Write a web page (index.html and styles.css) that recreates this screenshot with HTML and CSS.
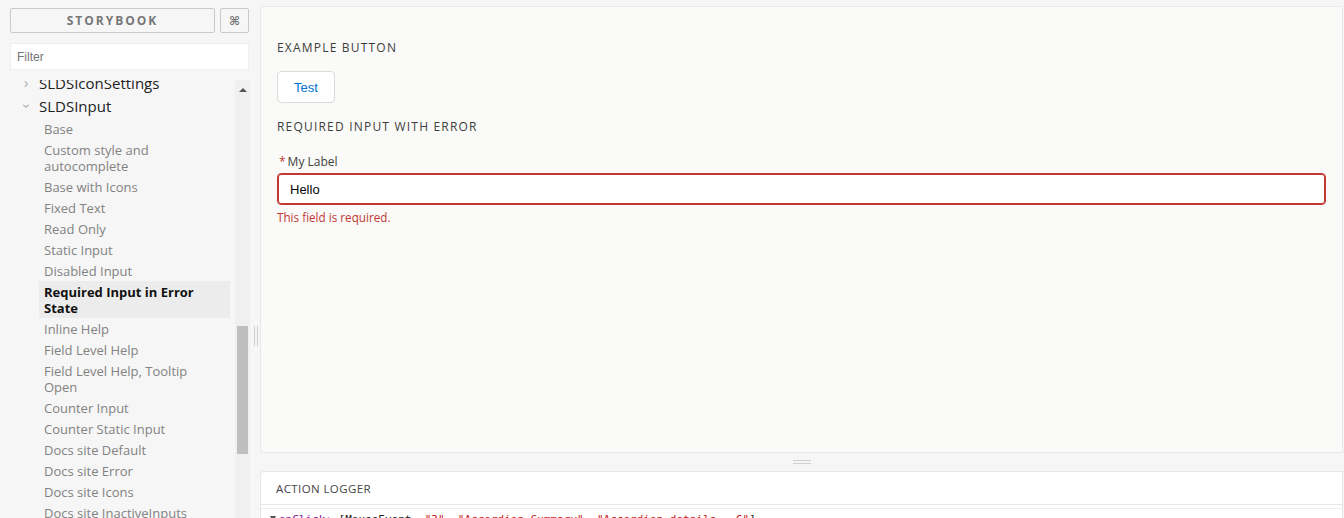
FILE: index.html
```html
<!DOCTYPE html>
<html lang="en">
<head>
    <meta charset="UTF-8">
    <title>Storybook - SLDSInput</title>
    <link rel="stylesheet" href="styles.css">
</head>
<body>
    <aside class="sidebar">
        <div class="brand-row">
            <button class="brand">STORYBOOK</button>
            <button class="shortcut">&#8984;</button>
        </div>
        <input class="filter" type="text" placeholder="Filter">

        <div class="tree-wrap">
            <ul class="tree">
                <li class="tree-kind"><span class="chev">&#8250;</span>SLDSIconSettings</li>
                <li class="tree-kind"><span class="chev open">&#8250;</span>SLDSInput</li>
                <li class="tree-story">Base</li>
                <li class="tree-story">Custom style and autocomplete</li>
                <li class="tree-story">Base with Icons</li>
                <li class="tree-story">Fixed Text</li>
                <li class="tree-story">Read Only</li>
                <li class="tree-story">Static Input</li>
                <li class="tree-story">Disabled Input</li>
                <li class="tree-story active">Required Input in Error State</li>
                <li class="tree-story">Inline Help</li>
                <li class="tree-story">Field Level Help</li>
                <li class="tree-story">Field Level Help, Tooltip Open</li>
                <li class="tree-story">Counter Input</li>
                <li class="tree-story">Counter Static Input</li>
                <li class="tree-story">Docs site Default</li>
                <li class="tree-story">Docs site Error</li>
                <li class="tree-story">Docs site Icons</li>
                <li class="tree-story">Docs site InactiveInputs</li>
            </ul>
            <div class="scrollbar">
                <span class="scroll-up"></span>
                <span class="scroll-thumb"></span>
            </div>
        </div>
    </aside>

    <div class="v-splitter"><span></span></div>

    <main class="main">
        <section class="preview">
            <h2 class="title-caps">Example Button</h2>
            <button class="btn-neutral">Test</button>

            <h2 class="title-caps">Required Input with Error</h2>
            <div class="form-element">
                <label class="form-label"><abbr class="required">*</abbr>My Label</label>
                <input class="form-input" type="text" value="Hello">
                <div class="form-help">This field is required.</div>
            </div>
        </section>

        <div class="h-splitter"><span></span></div>

        <section class="addons">
            <div class="addons-tabs">
                <span class="addons-tab">ACTION LOGGER</span>
            </div>
            <div class="log">
                <div class="log-line"><span class="tri"></span><span class="log-name">onClick:</span> [MouseEvent, <span class="log-str">"3"</span>, <span class="log-str">"Accordion Summary"</span>, <span class="log-str">"Accordion details - 6"</span>]</div>
            </div>
        </section>
    </main>
</body>
</html>
```

FILE: styles.css
```css
* {
    margin: 0;
    padding: 0;
    box-sizing: border-box;
}

html, body {
    height: 100%;
    overflow: hidden;
}

body {
    display: flex;
    font-family: 'Open Sans', 'Noto Sans', sans-serif;
    background-color: #f6f6f6;
    color: #333;
}

/* sidebar */

.sidebar {
    width: 252px;
    flex-shrink: 0;
    display: flex;
    flex-direction: column;
    padding-top: 8px;
}

.brand-row {
    display: flex;
    gap: 5px;
    padding: 0 3px 0 10px;
}

.brand {
    flex: 1;
    height: 25px;
    background: #f6f6f6;
    border: 1px solid #c9c9c9;
    border-radius: 2px;
    font-family: 'Open Sans', sans-serif;
    font-weight: 700;
    font-size: 12px;
    letter-spacing: 2px;
    color: #777;
}

.shortcut {
    width: 29px;
    height: 25px;
    background: #f6f6f6;
    border: 1px solid #c9c9c9;
    border-radius: 2px;
    font-size: 12px;
    font-weight: 700;
    color: #777;
    font-family: 'DejaVu Sans', sans-serif;
}

.filter {
    margin: 10px 3px 0 10px;
    height: 27px;
    border: 1px solid #efefef;
    background: #fff;
    padding: 0 6px;
    font-family: 'Liberation Sans', sans-serif;
    font-size: 12px;
    outline: none;
}

.filter::placeholder {
    color: #757575;
}

.tree-wrap {
    flex: 1;
    display: flex;
    margin-top: 10px;
    overflow: hidden;
}

.tree {
    list-style: none;
    width: 235px;
    margin-top: -9px;
}

.tree-kind {
    position: relative;
    height: 24px;
    line-height: 24px;
    padding-left: 39px;
    font-size: 15px;
    color: #222;
}

.tree-kind:first-child {
    height: 23px;
}

.chev {
    position: absolute;
    left: 24px;
    top: 0;
    font-size: 14px;
    color: #aaa;
}

.chev.open {
    transform: rotate(90deg);
    left: 25px;
}

.tree-story {
    margin: 0 5px 0 39px;
    padding: 2.5px 24px 2.5px 5px;
    font-size: 13px;
    line-height: 16px;
    color: #828282;
}

.tree-story.active {
    background: #ececec;
    color: #111;
    font-weight: 700;
}

.scrollbar {
    position: relative;
    width: 15px;
    background: #f0f0f0;
}

.scroll-up {
    position: absolute;
    left: 4px;
    top: 8px;
    border-left: 4px solid transparent;
    border-right: 4px solid transparent;
    border-bottom: 4px solid #555;
}

.scroll-thumb {
    position: absolute;
    left: 2px;
    top: 246px;
    width: 11px;
    height: 128px;
    background: #bebebe;
}

/* splitters */

.v-splitter {
    width: 8px;
    flex-shrink: 0;
    display: flex;
    align-items: flex-start;
    justify-content: center;
}

.v-splitter span {
    margin-top: 326px;
    width: 4px;
    height: 20px;
    border-left: 1px solid #d0d0d0;
    border-right: 1px solid #d0d0d0;
}

.h-splitter {
    height: 18px;
    flex-shrink: 0;
    display: flex;
    align-items: center;
    justify-content: center;
}

.h-splitter span {
    width: 18px;
    height: 4px;
    border-top: 1px solid #d0d0d0;
    border-bottom: 1px solid #d0d0d0;
}

/* main */

.main {
    flex: 1;
    display: flex;
    flex-direction: column;
    padding: 6px 1px 0 0;
    min-width: 0;
}

.preview {
    height: 447px;
    flex-shrink: 0;
    background: #fafaf9;
    border: 1px solid #e8e8e8;
    border-radius: 4px 0 0 4px;
    padding: 33px 16px 0 16px;
    font-family: 'Open Sans', sans-serif;
    color: #3e3e3c;
}

.title-caps {
    font-size: 12px;
    font-weight: 400;
    line-height: 15px;
    letter-spacing: 1.2px;
    text-transform: uppercase;
    color: #3e3e3c;
}

.btn-neutral {
    display: block;
    margin: 16px 0 16px;
    height: 32px;
    padding: 0 16px;
    background: #fff;
    border: 1px solid #dddbda;
    border-radius: 4px;
    font-family: 'Liberation Sans', sans-serif;
    font-size: 13px;
    color: #0070d2;
}

.form-element {
    margin-top: 19px;
}

.form-label {
    display: block;
    font-size: 12px;
    line-height: 18px;
    color: #3e3e3c;
    padding-left: 2px;
}

.required {
    color: #c23934;
    text-decoration: none;
    margin-right: 2px;
}

.form-input {
    display: block;
    width: 100%;
    height: 32px;
    margin-top: 2px;
    padding: 0 12px;
    background: #fff;
    border: 1px solid #c23934;
    box-shadow: inset 0 0 0 1px #c23934;
    border-radius: 4px;
    font-family: 'Liberation Sans', sans-serif;
    font-size: 13px;
    color: #080707;
    outline: none;
}

.form-help {
    margin-top: 3px;
    font-size: 11.7px;
    line-height: 18px;
    color: #c23934;
}

/* addons panel */

.addons {
    flex: 1;
    min-height: 0;
    overflow: hidden;
    background: #fff;
    border: 1px solid #e6e6e6;
    border-bottom: none;
    border-radius: 4px 0 0 0;
}

.addons-tabs {
    height: 33px;
    border-bottom: 1px solid #e6e6e6;
    display: flex;
    align-items: center;
    padding-left: 15px;
}

.addons-tab {
    font-size: 11.5px;
    letter-spacing: 0.4px;
    color: #444;
}

.log {
    margin-top: 3px;
    border-top: 1px solid #f0f0f0;
    padding: 3px 0 0 9px;
}

.log-line {
    font-family: 'DejaVu Sans Mono', monospace;
    font-size: 11px;
    line-height: 15px;
    color: #222;
    white-space: nowrap;
}

.tri {
    display: inline-block;
    vertical-align: 1px;
    margin-right: 3px;
    border-left: 3.5px solid transparent;
    border-right: 3.5px solid transparent;
    border-top: 6px solid #555;
}

.log-name {
    color: #881391;
}

.log-str {
    color: #c41a16;
}
```
